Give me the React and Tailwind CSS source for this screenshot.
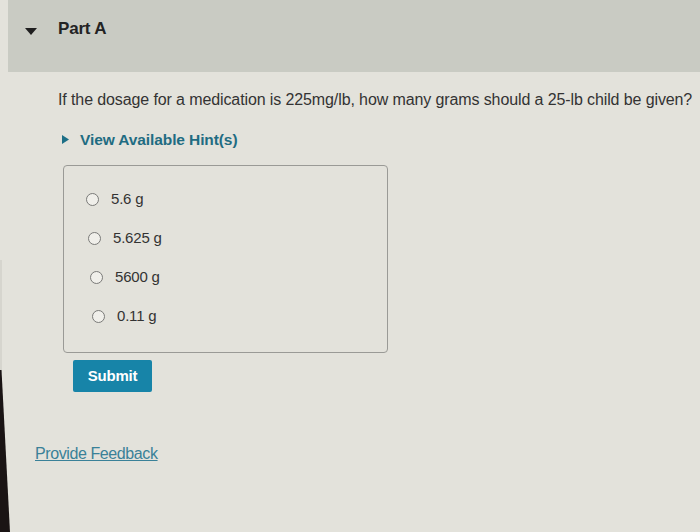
export default function App() {
  const options = ["5.6 g", "5.625 g", "5600 g", "0.11 g"];
  return (
    <div
      className="relative w-[700px] h-[532px] overflow-hidden bg-[#e3e2db]"
      style={{ fontFamily: '"Liberation Sans", Arial, sans-serif' }}
    >
      <div className="ml-[8px] h-[72px] bg-[#c9cbc3] flex items-center pb-[14px]">
        <svg width="12" height="8" viewBox="0 0 12 8" className="ml-[17px] mt-[6px]">
          <polygon points="0,0 12,0 6,7" fill="#1f1f1f" />
        </svg>
        <span className="ml-[21px] text-[17px] font-bold text-[#232323] tracking-[-0.2px]">Part A</span>
      </div>

      <div className="pl-[58px] pt-[18px]">
        <p className="text-[16px] text-[#333] tracking-[-0.11px] leading-[20px] whitespace-nowrap">
          If the dosage for a medication is 225mg/lb, how many grams should a 25-lb child be given?
        </p>

        <div className="mt-[18px] ml-[4px] flex items-center gap-[11px]">
          <svg width="7" height="9" viewBox="0 0 7 9">
            <polygon points="0,0 7,4.5 0,9" fill="#1d6f86" />
          </svg>
          <span className="text-[15.5px] font-bold text-[#1f6c82] tracking-[-0.1px]">View Available Hint(s)</span>
        </div>

        <div className="mt-[14px] ml-[5px] w-[325px] h-[188px] border border-[#9a9a96] rounded-[4px] pt-[23px] pl-[22px] flex flex-col gap-[19px]">
          {options.map((o, i) => (
            <div key={o} className="flex items-center gap-[12px]" style={{ marginLeft: i * 2 }}>
              <span className="w-[13px] h-[13px] rounded-full border-[1.5px] border-[#7a7a78] bg-[#f0efea]" />
              <span className="text-[15px] text-[#333] leading-[20px] tracking-[-0.2px]">{o}</span>
            </div>
          ))}
        </div>

        <button className="mt-[7px] ml-[15px] w-[79px] h-[32px] bg-[#1784a8] rounded-[2px] text-white text-[15px] font-bold tracking-[-0.2px]">
          Submit
        </button>
      </div>

      <a className="block mt-[50px] ml-[35px] text-[16px] text-[#3a8198] underline tracking-[-0.4px] w-fit">
        Provide Feedback
      </a>

      <svg className="absolute left-0 top-0" width="14" height="532" viewBox="0 0 14 532">
        <polygon points="0,260 2,260 2,372 0,372" fill="#d6d5ce" />
        <polygon points="0,370 1.5,370 10,532 0,532" fill="#1a1414" />
      </svg>
    </div>
  );
}
